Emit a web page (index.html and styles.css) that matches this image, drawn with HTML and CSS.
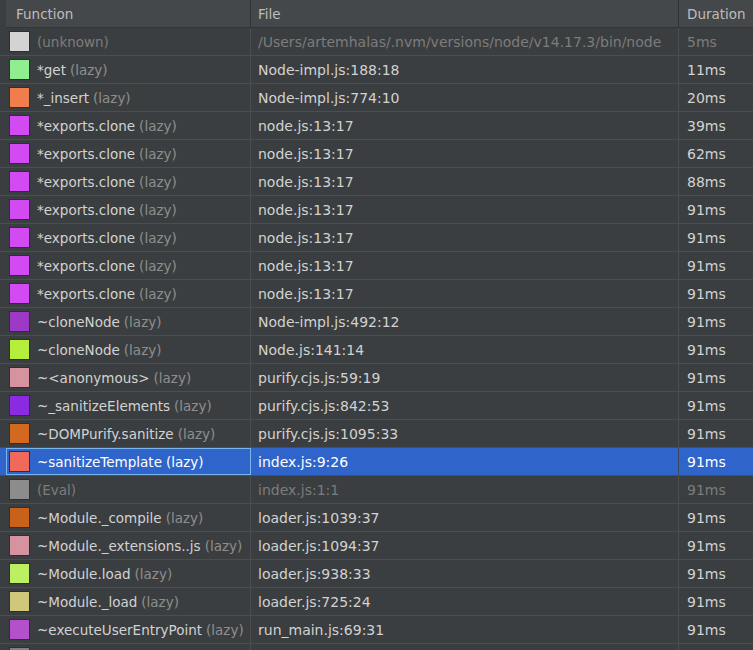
FILE: index.html
```html
<!DOCTYPE html>
<html lang="en">
<head>
    <meta charset="UTF-8">
    <title>Profiler - Bottom Up</title>
    <link rel="stylesheet" href="styles.css">
</head>
<body>
    <div class="profile-table">
        <div class="row head">
            <div class="cell fn">Function</div>
            <div class="cell file">File</div>
            <div class="cell dur">Duration</div>
        </div>

        <div class="row dim">
            <div class="cell fn"><span class="swatch" style="background:#d3d3d3"></span><span class="name">(unknown)</span></div>
            <div class="cell file">/Users/artemhalas/.nvm/versions/node/v14.17.3/bin/node</div>
            <div class="cell dur">5ms</div>
        </div>
        <div class="row">
            <div class="cell fn"><span class="swatch" style="background:#90ee90"></span><span class="name">*get</span> <span class="lazy">(lazy)</span></div>
            <div class="cell file">Node-impl.js:188:18</div>
            <div class="cell dur">11ms</div>
        </div>
        <div class="row">
            <div class="cell fn"><span class="swatch" style="background:#f07e4c"></span><span class="name">*_insert</span> <span class="lazy">(lazy)</span></div>
            <div class="cell file">Node-impl.js:774:10</div>
            <div class="cell dur">20ms</div>
        </div>
        <div class="row">
            <div class="cell fn"><span class="swatch" style="background:#d24af2"></span><span class="name">*exports.clone</span> <span class="lazy">(lazy)</span></div>
            <div class="cell file">node.js:13:17</div>
            <div class="cell dur">39ms</div>
        </div>
        <div class="row">
            <div class="cell fn"><span class="swatch" style="background:#d24af2"></span><span class="name">*exports.clone</span> <span class="lazy">(lazy)</span></div>
            <div class="cell file">node.js:13:17</div>
            <div class="cell dur">62ms</div>
        </div>
        <div class="row">
            <div class="cell fn"><span class="swatch" style="background:#d24af2"></span><span class="name">*exports.clone</span> <span class="lazy">(lazy)</span></div>
            <div class="cell file">node.js:13:17</div>
            <div class="cell dur">88ms</div>
        </div>
        <div class="row">
            <div class="cell fn"><span class="swatch" style="background:#d24af2"></span><span class="name">*exports.clone</span> <span class="lazy">(lazy)</span></div>
            <div class="cell file">node.js:13:17</div>
            <div class="cell dur">91ms</div>
        </div>
        <div class="row">
            <div class="cell fn"><span class="swatch" style="background:#d24af2"></span><span class="name">*exports.clone</span> <span class="lazy">(lazy)</span></div>
            <div class="cell file">node.js:13:17</div>
            <div class="cell dur">91ms</div>
        </div>
        <div class="row">
            <div class="cell fn"><span class="swatch" style="background:#d24af2"></span><span class="name">*exports.clone</span> <span class="lazy">(lazy)</span></div>
            <div class="cell file">node.js:13:17</div>
            <div class="cell dur">91ms</div>
        </div>
        <div class="row">
            <div class="cell fn"><span class="swatch" style="background:#d24af2"></span><span class="name">*exports.clone</span> <span class="lazy">(lazy)</span></div>
            <div class="cell file">node.js:13:17</div>
            <div class="cell dur">91ms</div>
        </div>
        <div class="row">
            <div class="cell fn"><span class="swatch" style="background:#9c3ac6"></span><span class="name">~cloneNode</span> <span class="lazy">(lazy)</span></div>
            <div class="cell file">Node-impl.js:492:12</div>
            <div class="cell dur">91ms</div>
        </div>
        <div class="row">
            <div class="cell fn"><span class="swatch" style="background:#b6ee3c"></span><span class="name">~cloneNode</span> <span class="lazy">(lazy)</span></div>
            <div class="cell file">Node.js:141:14</div>
            <div class="cell dur">91ms</div>
        </div>
        <div class="row">
            <div class="cell fn"><span class="swatch" style="background:#d4939e"></span><span class="name">~&lt;anonymous&gt;</span> <span class="lazy">(lazy)</span></div>
            <div class="cell file">purify.cjs.js:59:19</div>
            <div class="cell dur">91ms</div>
        </div>
        <div class="row">
            <div class="cell fn"><span class="swatch" style="background:#8a2be2"></span><span class="name">~_sanitizeElements</span> <span class="lazy">(lazy)</span></div>
            <div class="cell file">purify.cjs.js:842:53</div>
            <div class="cell dur">91ms</div>
        </div>
        <div class="row">
            <div class="cell fn"><span class="swatch" style="background:#d2691e"></span><span class="name">~DOMPurify.sanitize</span> <span class="lazy">(lazy)</span></div>
            <div class="cell file">purify.cjs.js:1095:33</div>
            <div class="cell dur">91ms</div>
        </div>
        <div class="row selected">
            <div class="cell fn"><span class="swatch" style="background:#f0695a"></span><span class="name">~sanitizeTemplate</span> <span class="lazy">(lazy)</span></div>
            <div class="cell file">index.js:9:26</div>
            <div class="cell dur">91ms</div>
        </div>
        <div class="row dim">
            <div class="cell fn"><span class="swatch" style="background:#8c8c8c"></span><span class="name">(Eval)</span></div>
            <div class="cell file">index.js:1:1</div>
            <div class="cell dur">91ms</div>
        </div>
        <div class="row">
            <div class="cell fn"><span class="swatch" style="background:#c8621a"></span><span class="name">~Module._compile</span> <span class="lazy">(lazy)</span></div>
            <div class="cell file">loader.js:1039:37</div>
            <div class="cell dur">91ms</div>
        </div>
        <div class="row">
            <div class="cell fn"><span class="swatch" style="background:#d4939e"></span><span class="name">~Module._extensions..js</span> <span class="lazy">(lazy)</span></div>
            <div class="cell file">loader.js:1094:37</div>
            <div class="cell dur">91ms</div>
        </div>
        <div class="row">
            <div class="cell fn"><span class="swatch" style="background:#bcef62"></span><span class="name">~Module.load</span> <span class="lazy">(lazy)</span></div>
            <div class="cell file">loader.js:938:33</div>
            <div class="cell dur">91ms</div>
        </div>
        <div class="row">
            <div class="cell fn"><span class="swatch" style="background:#cfc87a"></span><span class="name">~Module._load</span> <span class="lazy">(lazy)</span></div>
            <div class="cell file">loader.js:725:24</div>
            <div class="cell dur">91ms</div>
        </div>
        <div class="row">
            <div class="cell fn"><span class="swatch" style="background:#b350cc"></span><span class="name">~executeUserEntryPoint</span> <span class="lazy">(lazy)</span></div>
            <div class="cell file">run_main.js:69:31</div>
            <div class="cell dur">91ms</div>
        </div>
        <!-- next row only peeks in at the bottom edge -->
        <div class="row">
            <div class="cell fn"><span class="swatch" style="background:#808080"></span></div>
            <div class="cell file"></div>
            <div class="cell dur"></div>
        </div>
    </div>
</body>
</html>
```

FILE: styles.css
```css
html, body { margin: 0; padding: 0; background: #3b3e40; overflow: hidden; }
body { font-family: "DejaVu Sans", sans-serif; font-size: 14px; color: #d2d2d2; }

.profile-table { width: 753px; }
.row { display: grid; grid-template-columns: 245px 428px 1fr; height: 27px; border-bottom: 1px solid #4b4e50; padding-left: 6px; }
.cell { display: flex; align-items: center; white-space: nowrap; overflow: hidden; border-right: 1px solid #4b4e50; }
.cell.dur { border-right: none; }

.head { background: #45484a; border-bottom: 1px solid #323435; margin-left: 6px; padding-left: 0; color: #bdbdbd; font-size: 13.5px; }
.head .cell { border-right-color: #2f3132; }
.head .fn { padding-left: 10px; }

.fn { padding-left: 3px; font-size: 13.5px; }
.file { padding-left: 7px; }
.dur { padding-left: 8px; }

.swatch { width: 19px; height: 19px; border: 1px solid #2e2f30; margin-right: 7px; flex: none; }
.lazy { color: #8e8e8e; margin-left: 4px; }

.dim { color: #7c7c7c; }

.selected { background: #2f65ca; color: #fff; }
.selected .fn { outline: 1px solid #79b4ec; outline-offset: -1px; border-right: none; }
.selected .file { border-right-color: #3d4a5c; }
.selected .lazy { color: #fff; }
```
